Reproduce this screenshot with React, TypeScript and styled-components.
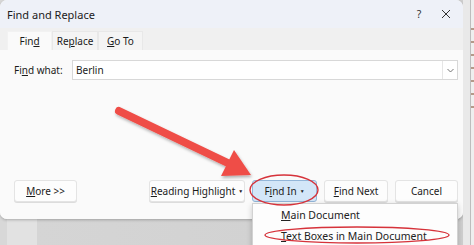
import React from "react";
import styled, { createGlobalStyle } from "styled-components";

const GlobalStyle = createGlobalStyle`
  html, body { margin: 0; padding: 0; }
  body { font-family: "Noto Sans", "Open Sans", sans-serif; color: #1b1b1b; }
`;

const Stage = styled.div`
  position: relative;
  width: 474px;
  height: 245px;
  overflow: hidden;
  display: flex;
  align-items: flex-start;
  background: linear-gradient(90deg, #d8d8d8 0px, #d8d8d8 7px, #e2e2e2 7px, #e2e2e2 37px, #d5d5d5 37px, #cfcfcf 100%);
`;

const Dialog = styled.div`
  width: 463px;
  height: 219px;
  flex: none;
  display: flex;
  flex-direction: column;
  background: #f9f9f9;
  border-radius: 7px;
  box-shadow: 0 1px 3px rgba(0, 0, 0, 0.25);
  overflow: hidden;
`;

const TitleBar = styled.div`
  height: 28px;
  flex: none;
  display: flex;
  align-items: center;
  padding: 0 0 0 7px;
  background: #eef1f8;
  font-size: 11px;
`;

const Title = styled.div`
  flex: 1;
`;

const TitleIcon = styled.div<{ $w: number }>`
  width: ${(p) => p.$w}px;
  display: flex;
  justify-content: center;
  align-items: center;
  color: #333;
  font-size: 10.5px;
`;

const TabStrip = styled.div`
  height: 22px;
  flex: none;
  display: flex;
  align-items: flex-end;
  padding-left: 7px;
  background: #f0f0f0;
`;

const Tab = styled.div<{ $active?: boolean; $w: number }>`
  width: ${(p) => p.$w}px;
  height: 19px;
  display: flex;
  align-items: center;
  justify-content: center;
  font-size: 10px;
  background: ${(p) => (p.$active ? "#fafafa" : "#f4f4f4")};
  border: 1px solid ${(p) => (p.$active ? "#f2f2f2" : "#e8e8e8")};
  border-bottom: none;
  box-sizing: border-box;
`;

const Key = styled.span`
  text-decoration: underline;
  text-underline-offset: 1px;
`;

const Panel = styled.div`
  flex: 1;
  display: flex;
  flex-direction: column;
  justify-content: space-between;
  padding: 10px 5px 17px 14px;
  background: #fafafa;
`;

const FieldRow = styled.div`
  display: flex;
  align-items: center;
`;

const Label = styled.div`
  width: 58px;
  font-size: 10px;
`;

const Combo = styled.div`
  width: 386px;
  height: 20px;
  box-sizing: border-box;
  display: flex;
  align-items: center;
  background: #ffffff;
  border: 1px solid #d8d8d8;
  font-size: 10px;
`;

const ComboText = styled.div`
  flex: 1;
  padding-left: 3px;
`;

const ComboArrow = styled.div`
  width: 14px;
  height: 18px;
  border-left: 1px solid #e6e6e6;
  display: flex;
  align-items: center;
  justify-content: center;
`;

const ButtonRow = styled.div`
  display: flex;
  align-items: center;
  gap: 7px;
`;

const Button = styled.div<{ $w: number; $primary?: boolean }>`
  width: ${(p) => p.$w}px;
  height: 22px;
  box-sizing: border-box;
  display: flex;
  align-items: center;
  justify-content: center;
  gap: 3px;
  white-space: nowrap;
  font-size: 10px;
  border-radius: 3px;
  background: ${(p) => (p.$primary ? "#d3e6f8" : "#fdfdfd")};
  border: 1px solid ${(p) => (p.$primary ? "#93b6d9" : "#e4e4e4")};
  box-shadow: ${(p) => (p.$primary ? "none" : "0 1px 0 #dcdcdc")};
`;

const Spacer = styled.div`
  flex: 1;
`;

const Caret = styled.span`
  font-size: 5px;
  line-height: 1;
`;

const DocEdge = styled.div`
  flex: 1;
  height: 219px;
  display: flex;
  flex-direction: column;
  gap: 11px;
  padding-top: 28px;
  background: linear-gradient(90deg, #e9e9e9 0, #e9e9e9 7px, #bdbdbd 7px, #bdbdbd 8px, #efefef 8px);
`;

const DocLine = styled.div`
  height: 2px;
  width: 4px;
  margin-left: 8px;
  background: #b49a8a;
`;

const Menu = styled.div`
  position: absolute;
  left: 252px;
  top: 203px;
  width: 206px;
  height: 50px;
  box-sizing: border-box;
  background: #fdfdfd;
  border: 1px solid #d2d2d2;
  box-shadow: 0 2px 6px rgba(0, 0, 0, 0.2);
`;

const MenuItem = styled.div`
  height: 21px;
  display: flex;
  align-items: center;
  padding-left: 28px;
  font-size: 10.5px;
  color: #222;
`;

const Overlay = styled.svg`
  position: absolute;
  left: 0;
  top: 0;
  pointer-events: none;
`;

export default function App() {
  return (
    <>
      <GlobalStyle />
      <Stage>
        <Dialog>
          <TitleBar>
            <Title>Find and Replace</Title>
            <TitleIcon $w={20}>?</TitleIcon>
            <TitleIcon $w={34}>
              <svg width="10" height="10" viewBox="0 0 10 10">
                <path d="M1 1 L9 9 M9 1 L1 9" stroke="#333" strokeWidth="1" />
              </svg>
            </TitleIcon>
          </TitleBar>
          <TabStrip>
            <Tab $active $w={45}>
              Fin<Key>d</Key>
            </Tab>
            <Tab $w={46}>
              Re<Key>p</Key>lace
            </Tab>
            <Tab $w={45}>
              <Key>G</Key>o To
            </Tab>
          </TabStrip>
          <Panel>
            <FieldRow>
              <Label>
                Fi<Key>n</Key>d what:
              </Label>
              <Combo>
                <ComboText>Berlin</ComboText>
                <ComboArrow>
                  <svg width="7" height="5" viewBox="0 0 7 5">
                    <path d="M0.5 1 L3.5 4 L6.5 1" fill="none" stroke="#666" strokeWidth="0.9" />
                  </svg>
                </ComboArrow>
              </Combo>
            </FieldRow>
            <ButtonRow>
              <Button $w={63}>
                <span>
                  <Key>M</Key>ore &gt;&gt;
                </span>
              </Button>
              <Spacer />
              <Button $w={96}>
                <span>
                  <Key>R</Key>eading Highlight
                </span>
                <Caret>▼</Caret>
              </Button>
              <Button $w={65} $primary>
                <span>
                  F<Key>i</Key>nd In
                </span>
                <Caret>▼</Caret>
              </Button>
              <Button $w={64}>
                <span>
                  <Key>F</Key>ind Next
                </span>
              </Button>
              <Button $w={63}>Cancel</Button>
            </ButtonRow>
          </Panel>
        </Dialog>
        <DocEdge>
          <DocLine />
          <DocLine />
          <DocLine />
          <DocLine />
          <DocLine />
          <DocLine />
          <DocLine />
        </DocEdge>
        <Menu>
          <MenuItem>
            <span>
              <Key>M</Key>ain Document
            </span>
          </MenuItem>
          <MenuItem>
            <span>
              <Key>T</Key>ext Boxes in Main Document
            </span>
          </MenuItem>
        </Menu>
        <Overlay width="474" height="245" viewBox="0 0 474 245">
          <defs>
            <filter id="sh" x="-20%" y="-20%" width="140%" height="140%">
              <feDropShadow dx="1" dy="2" stdDeviation="1.5" floodColor="#000" floodOpacity="0.3" />
            </filter>
          </defs>
          <g filter="url(#sh)">
            <line x1="119" y1="111" x2="232" y2="165" stroke="#ef4d47" strokeWidth="8" strokeLinecap="round" />
            <polygon points="234,150 221,176 251,175" fill="#ef4d47" />
          </g>
          <ellipse cx="284" cy="190" rx="34" ry="15" fill="none" stroke="#d6323a" strokeWidth="1.4" />
          <ellipse cx="357" cy="235" rx="92" ry="8" fill="none" stroke="#d6323a" strokeWidth="1.4" />
        </Overlay>
      </Stage>
    </>
  );
}
